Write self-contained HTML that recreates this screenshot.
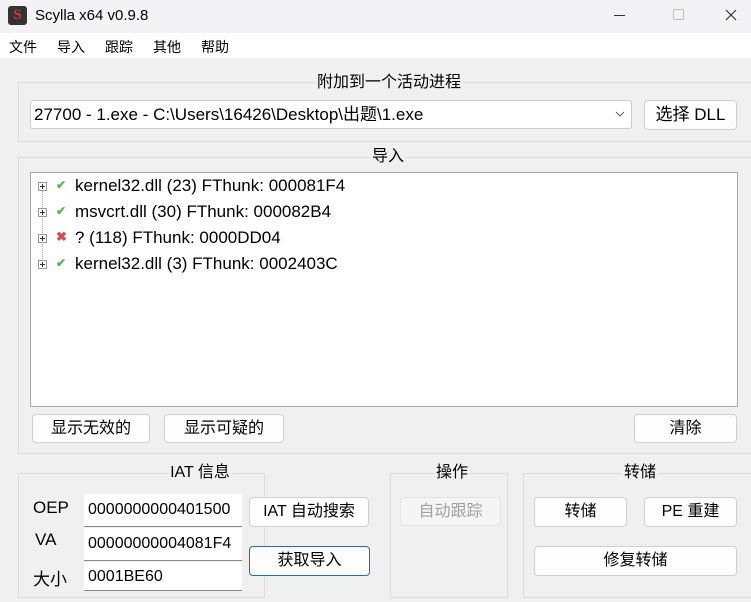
<!DOCTYPE html>
<html><head><meta charset="utf-8"><style>
*{box-sizing:border-box;margin:0;padding:0}
body{width:751px;height:602px;overflow:hidden;background:#f0f0f0;font-family:"Liberation Sans","Noto Sans CJK SC",sans-serif;color:#000;position:relative}
.a{position:absolute}
.tb{left:0;top:0;width:751px;height:33px;background:#f3f3f6}
.menu{left:0;top:33px;width:751px;height:25px;background:#fff;font-size:14px}
.menu span{position:absolute;top:4px}
.grp{position:absolute;border:1px solid #dcdcdc;border-right:none}
.gt{position:absolute;background:#f0f0f0;font-size:16px;padding:0 2px;line-height:18px;transform:translateX(-50%)}
.btn{position:absolute;background:#fdfdfd;border:1px solid #d0d0d0;border-radius:4px;font-size:16px;text-align:center;line-height:27px}
.inp{position:absolute;background:#fff;border-bottom:1px solid #888;font-size:16px;padding-left:4px;line-height:31px;overflow:hidden;white-space:nowrap}
.lbl{position:absolute;font-size:17px}
.row{position:absolute;left:75px;font-size:17px;line-height:20px;white-space:nowrap}
.pl{position:absolute;left:38px;width:9px;height:9px;border:1px solid #999;background:#fff}
.pl:before{content:"";position:absolute;left:1px;top:3px;width:5px;height:1px;background:#333}
.pl:after{content:"";position:absolute;left:3px;top:1px;width:1px;height:5px;background:#333}
.ck{position:absolute;left:56px;color:#5cb05c;font-size:12px;font-weight:bold}
</style></head><body>
<div class="a tb"></div>
<div class="a" style="left:8px;top:6px;width:19px;height:19px;background:#333;border-radius:3px;color:#d33;font-weight:bold;font-size:15px;text-align:center;line-height:19px;font-family:'Liberation Serif',serif">S</div>
<div class="a" style="left:35px;top:7px;font-size:15px">Scylla x64 v0.9.8</div>
<div class="a" style="left:614px;top:15px;width:11px;height:1px;background:#333"></div>
<div class="a" style="left:673px;top:9px;width:11px;height:11px;border:1px solid #bbb;border-radius:2px"></div>
<svg class="a" style="left:725px;top:9px" width="12" height="12"><path d="M1 1L11 11M11 1L1 11" stroke="#333" stroke-width="1.2"/></svg>
<div class="a menu"><span style="left:9px">文件</span><span style="left:57px">导入</span><span style="left:105px">跟踪</span><span style="left:153px">其他</span><span style="left:201px">帮助</span></div>

<div class="grp" style="left:18px;top:82px;width:740px;height:60px"></div>
<div class="gt" style="left:389px;top:74px">附加到一个活动进程</div>
<div class="a" style="left:30px;top:100px;width:602px;height:29px;background:#fff;border:1px solid #ccc;border-radius:3px;font-size:17px;line-height:27px;padding-left:3px">27700 - 1.exe - C:\Users\16426\Desktop\出题\1.exe</div>
<svg class="a" style="left:615px;top:111px" width="10" height="6"><path d="M1 1L5 5L9 1" stroke="#666" fill="none"/></svg>
<div class="btn" style="left:644px;top:100px;width:93px;height:30px;font-size:17px">选择 DLL</div>

<div class="grp" style="left:18px;top:157px;width:740px;height:297px"></div>
<div class="gt" style="left:388px;top:148px">导入</div>
<div class="a" style="left:30px;top:172px;width:708px;height:235px;background:#fff;border:1px solid #aaa"></div>
<div class="a" style="left:42px;top:191px;height:72px;border-left:1px dotted #aaa"></div>
<div class="pl" style="top:182px"></div><div class="ck" style="top:178px">✔</div><div class="row" style="top:176px">kernel32.dll (23) FThunk: 000081F4</div>
<div class="pl" style="top:208px"></div><div class="ck" style="top:204px">✔</div><div class="row" style="top:202px">msvcrt.dll (30) FThunk: 000082B4</div>
<div class="pl" style="top:234px"></div><div class="ck" style="top:229px;color:#e04848;font-size:13px">✖</div><div class="row" style="top:228px">? (118) FThunk: 0000DD04</div>
<div class="pl" style="top:260px"></div><div class="ck" style="top:256px">✔</div><div class="row" style="top:254px">kernel32.dll (3) FThunk: 0002403C</div>
<div class="btn" style="left:32px;top:414px;width:118px;height:29px">显示无效的</div>
<div class="btn" style="left:164px;top:414px;width:120px;height:29px">显示可疑的</div>
<div class="btn" style="left:634px;top:414px;width:103px;height:29px">清除</div>

<div class="grp" style="left:18px;top:473px;width:247px;height:125px;border-right:1px solid #dcdcdc"></div>
<div class="gt" style="left:200px;top:464px">IAT 信息</div>
<div class="lbl" style="left:33px;top:498px">OEP</div>
<div class="lbl" style="left:35px;top:530px">VA</div>
<div class="lbl" style="left:33px;top:565px">大小</div>
<div class="inp" style="left:84px;top:494px;width:158px;height:33px">0000000000401500</div>
<div class="inp" style="left:84px;top:528px;width:158px;height:33px">00000000004081F4</div>
<div class="inp" style="left:84px;top:562px;width:158px;height:29px;line-height:29px">0001BE60</div>
<div class="btn" style="left:249px;top:497px;width:120px;height:30px">IAT 自动搜索</div>
<div class="btn" style="left:249px;top:546px;width:121px;height:30px;border-color:#1a6fc0">获取导入</div>

<div class="grp" style="left:390px;top:473px;width:118px;height:125px;border-right:1px solid #dcdcdc"></div>
<div class="gt" style="left:452px;top:464px">操作</div>
<div class="btn" style="left:400px;top:497px;width:101px;height:29px;background:#f5f5f5;border-color:#e2e2e2;color:#a0a0a0">自动跟踪</div>

<div class="grp" style="left:523px;top:473px;width:240px;height:125px"></div>
<div class="gt" style="left:640px;top:464px">转储</div>
<div class="btn" style="left:534px;top:497px;width:93px;height:30px">转储</div>
<div class="btn" style="left:644px;top:497px;width:93px;height:30px">PE 重建</div>
<div class="btn" style="left:534px;top:546px;width:203px;height:30px">修复转储</div>
</body></html>
